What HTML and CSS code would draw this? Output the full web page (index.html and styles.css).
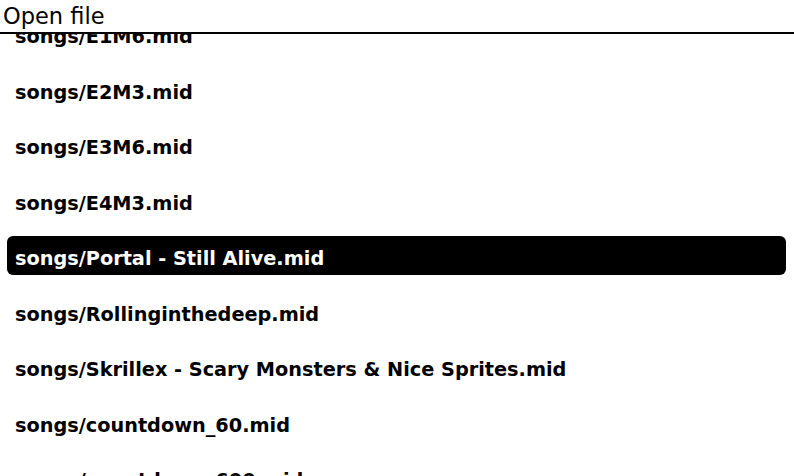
FILE: index.html
```html
<!DOCTYPE html>
<html lang="en">
<head>
<meta charset="utf-8">
<title>Open file</title>
<link rel="stylesheet" href="styles.css">
</head>
<body>
<div class="dialog">
  <header class="title-bar">
    <h1 class="title">Open file</h1>
  </header>
  <div class="file-list">
    <ul class="files">
      <li class="file"><span class="file-item">songs/E1M6.mid</span></li>
      <li class="file"><span class="file-item">songs/E2M3.mid</span></li>
      <li class="file"><span class="file-item">songs/E3M6.mid</span></li>
      <li class="file"><span class="file-item">songs/E4M3.mid</span></li>
      <li class="file"><span class="file-item is-selected">songs/Portal - Still Alive.mid</span></li>
      <li class="file"><span class="file-item">songs/Rollinginthedeep.mid</span></li>
      <li class="file"><span class="file-item">songs/Skrillex - Scary Monsters &amp; Nice Sprites.mid</span></li>
      <li class="file"><span class="file-item">songs/countdown_60.mid</span></li>
      <li class="file"><span class="file-item">songs/countdown_600.mid</span></li>
    </ul>
  </div>
</div>
</body>
</html>
```

FILE: styles.css
```css
* { box-sizing: border-box; }
html, body {
  margin: 0;
  padding: 0;
  background: #fff;
  color: #000;
}
body {
  font-family: "DejaVu Sans", "Liberation Sans", sans-serif;
  overflow: hidden;
}
.dialog {
  width: 794px;
  height: 476px;
  display: flex;
  flex-direction: column;
  overflow: hidden;
}
.title-bar {
  height: 34px;
  border-bottom: 2px solid #000;
  padding: 0 0 0 3px;
  flex: none;
  overflow: hidden;
}
.title {
  margin: 0;
  font-size: 22.5px;
  font-weight: 400;
  line-height: 33px;
  letter-spacing: 0;
}
.file-list {
  flex: 1;
  overflow: hidden;
}
.files {
  list-style: none;
  margin: -28px 0 0 0;
  padding: 0;
}
.file {
  height: 55.5px;
  padding: 8px 8px 0 7px;
}
.file-item {
  display: block;
  height: 39px;
  padding: 6px 8px 0 8px;
  line-height: 33px;
  border-radius: 6px;
  font-size: 19.3px;
  font-weight: 700;
  letter-spacing: 0;
  white-space: nowrap;
}
.file-item.is-selected {
  background: #000;
  color: #fff;
}
```
